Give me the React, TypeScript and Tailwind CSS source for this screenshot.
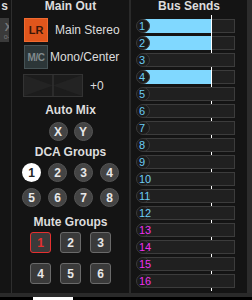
import React from 'react';

const busSends = Array.from({ length: 16 }, (_, i) => ({
  n: i + 1,
  on: [1, 2, 4].includes(i + 1),
}));

const PanBox = () => (
  <div className="relative w-[60px] h-[23px] border border-[#333] bg-[#1c1c1c] flex">
    <svg width="58" height="21" viewBox="0 0 58 21" className="absolute inset-0">
      <polygon points="0,0 29,10.5 0,21" fill="#232323" />
      <polygon points="58,0 29,10.5 58,21" fill="#232323" />
      <line x1="29" y1="0" x2="29" y2="21" stroke="#3a3a3a" strokeWidth="1" />
    </svg>
  </div>
);

const Circle = ({ label, active }: { label: string; active?: boolean }) => (
  <div
    className={`w-[19px] h-[19px] rounded-full flex items-center justify-center text-[12px] font-bold leading-none ${
      active ? 'bg-white text-[#222]' : 'bg-[#444] border border-[#555] text-[#e8e8e8]'
    }`}
  >
    {label}
  </div>
);

const MuteBtn = ({ label, active }: { label: string; active?: boolean }) => (
  <div
    className={`w-[21px] h-[21px] rounded-[3px] flex items-center justify-center text-[12px] font-bold leading-none bg-[#3a3a3a] border ${
      active ? 'border-[#e53030] text-[#e53030]' : 'border-[#6a6a6a] text-[#e8e8e8]'
    }`}
  >
    {label}
  </div>
);

export default function App() {
  return (
    <div className="w-[252px] h-[300px] bg-black overflow-hidden font-['Liberation_Sans',Arial,sans-serif]">
      <div className="flex h-[293px] bg-[#141414]">
        {/* cut-off neighbour panel */}
        <div className="w-[11px] overflow-hidden flex flex-col">
          <div className="text-[12px] font-bold leading-[13px] text-[#ddd] whitespace-nowrap flex justify-end pr-[3px]">s</div>
          <div className="mt-[5px] w-[9px] h-[24px] bg-[#3a3a3a] overflow-hidden flex flex-col items-end">
            <span className="text-[11px] font-bold leading-[12px] text-[#777] mt-[3px] mr-[-3px]">X</span>
            <span className="text-[7px] leading-[7px] text-[#777] mr-[-1px]">o-</span>
          </div>
        </div>
        <div className="w-px bg-[#2e2e2e]" />

        {/* Main Out */}
        <div className="w-[117px] flex flex-col items-center">
          <div className="text-[12px] font-bold leading-[13px] text-[#ddd]">Main Out</div>
          <div className="self-stretch flex items-center mt-[5px] pl-[12px] h-[24px]">
            <div className="w-[24px] h-[24px] bg-[#e0561c] border border-[#f06a30] flex items-center justify-center text-[11px] font-bold text-[#3a1708]">LR</div>
            <span className="ml-[7px] text-[12px] text-[#ddd]">Main Stereo</span>
          </div>
          <div className="self-stretch flex items-center mt-[3px] pl-[12px] h-[24px]">
            <div className="w-[24px] h-[24px] bg-[#2c3638] border border-[#455255] flex items-center justify-center text-[10px] font-bold text-[#808a8c] tracking-[-0.5px]">M/C</div>
            <span className="ml-[2px] text-[12px] text-[#ddd]">Mono/Center</span>
          </div>
          <div className="self-stretch flex items-center mt-[5px] pl-[11px] h-[23px]">
            <PanBox />
            <span className="ml-[7px] text-[12px] text-[#ddd]">+0</span>
          </div>
          <div className="mt-[7px] text-[12px] font-bold leading-[13px] text-[#ddd]">Auto Mix</div>
          <div className="mt-[5px] flex gap-[6px]">
            <Circle label="X" />
            <Circle label="Y" />
          </div>
          <div className="mt-[5px] text-[12px] font-bold leading-[13px] text-[#ddd]">DCA Groups</div>
          <div className="mt-[4px] flex gap-[7px]">
            <Circle label="1" active />
            <Circle label="2" />
            <Circle label="3" />
            <Circle label="4" />
          </div>
          <div className="mt-[6px] flex gap-[7px]">
            <Circle label="5" />
            <Circle label="6" />
            <Circle label="7" />
            <Circle label="8" />
          </div>
          <div className="mt-[9px] text-[12px] font-bold leading-[13px] text-[#ddd]">Mute Groups</div>
          <div className="mt-[3px] flex gap-[9px]">
            <MuteBtn label="1" active />
            <MuteBtn label="2" />
            <MuteBtn label="3" />
          </div>
          <div className="mt-[10px] flex gap-[9px]">
            <MuteBtn label="4" />
            <MuteBtn label="5" />
            <MuteBtn label="6" />
          </div>
        </div>
        <div className="w-[2px] bg-[#2a2a2a]" />

        {/* Bus Sends */}
        <div className="w-[116px] flex flex-col">
          <div className="text-[12px] font-bold leading-[13px] text-[#ddd] text-center">Bus Sends</div>
          <div className="relative mt-[6px] ml-[5px] w-[99px] flex flex-col gap-[3px]">
            <div className="absolute left-[75px] top-[-4px] bottom-[-3px] w-px bg-white" />
            {busSends.map(b => (
              <div key={b.n} className="relative h-[14px]">
                <div className="absolute left-[7px] right-0 inset-y-0 border border-[#3c3c3c] bg-[#202020]" />
                {b.on && (
                  <div className="absolute left-[7px] w-[69px] inset-y-0 bg-[#80d8ff] border-r border-white" />
                )}
                <div
                  className={`absolute left-0 top-0 w-[14px] h-[14px] rounded-full border border-[#3a3a3a] bg-[#1a1a1a] text-[11px] leading-[12px] pl-[2px] whitespace-nowrap ${
                    b.n > 12 ? 'text-[#ee30ee]' : 'text-[#6ccdf5]'
                  }`}
                >
                  {b.n}
                </div>
              </div>
            ))}
          </div>
        </div>
        <div className="w-[5px] bg-[#2c2c2c]" />
      </div>
      <div className="h-[4px] bg-[#2a2a2a]" />
      <div className="h-[3px] flex">
        <div className="w-[33px]" />
        <div className="w-[40px] bg-white" />
      </div>
    </div>
  );
}
